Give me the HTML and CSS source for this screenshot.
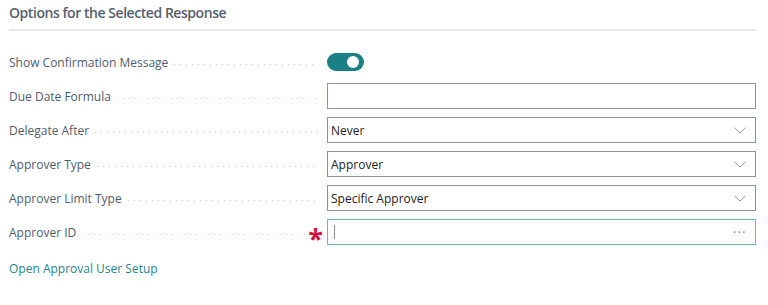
FILE: index.html
```html
<!DOCTYPE html>
<html>
<head>
<meta charset="utf-8">
<link rel="stylesheet" href="styles.css">
</head>
<body>
<div class="panel">
  <div class="title">Options for the Selected Response</div>
  <div class="rows">
    <div class="row">
      <div class="label"><span class="text">Show Confirmation Message</span><span class="dots"></span></div>
      <div class="control"><span class="toggle"><span class="knob"></span></span></div>
    </div>
    <div class="row">
      <div class="label"><span class="text">Due Date Formula</span><span class="dots"></span></div>
      <div class="control"><div class="input"></div></div>
    </div>
    <div class="row">
      <div class="label"><span class="text">Delegate After</span><span class="dots"></span></div>
      <div class="control"><div class="input select"><span class="val">Never</span><svg class="chev" width="12" height="7" viewBox="0 0 12 7"><path d="M0.5 0.8 L6 6 L11.5 0.8" fill="none" stroke="#8a939d" stroke-width="1"/></svg></div></div>
    </div>
    <div class="row">
      <div class="label"><span class="text">Approver Type</span><span class="dots"></span></div>
      <div class="control"><div class="input select"><span class="val">Approver</span><svg class="chev" width="12" height="7" viewBox="0 0 12 7"><path d="M0.5 0.8 L6 6 L11.5 0.8" fill="none" stroke="#8a939d" stroke-width="1"/></svg></div></div>
    </div>
    <div class="row">
      <div class="label"><span class="text">Approver Limit Type</span><span class="dots"></span></div>
      <div class="control"><div class="input select"><span class="val">Specific Approver</span><svg class="chev" width="12" height="7" viewBox="0 0 12 7"><path d="M0.5 0.8 L6 6 L11.5 0.8" fill="none" stroke="#8a939d" stroke-width="1"/></svg></div></div>
    </div>
    <div class="row">
      <div class="label"><span class="text">Approver ID</span><span class="dots"></span><span class="req">*</span></div>
      <div class="control"><div class="input focus"><span class="caret"></span><span class="more">···</span></div></div>
    </div>
  </div>
  <a class="link">Open Approval User Setup</a>
</div>
</body>
</html>
```

FILE: styles.css
```css
* { box-sizing: border-box; }
body {
  margin: 0;
  background: #ffffff;
  font-family: "Open Sans", "Noto Sans", sans-serif;
  color: #505c6d;
}
.panel {
  width: 756px;
  padding: 3px 0 0 9px;
}
.title {
  font-size: 14px;
  font-weight: 600;
  letter-spacing: -0.45px;
  color: #56606c;
  line-height: 20px;
  padding-bottom: 6px;
  border-bottom: 2px solid #e8e8e8;
}
.rows {
  display: flex;
  flex-direction: column;
  gap: 8px;
  margin-top: 18px;
}
.row {
  display: grid;
  grid-template-columns: 318px 1fr;
  height: 26px;
  align-items: center;
}
.label {
  display: flex;
  align-items: center;
  height: 26px;
  font-size: 12px;
  color: #505c6d;
  padding-right: 9px;
}
.label .text { white-space: nowrap; padding-right: 6px; }
.dots {
  flex: 1;
  height: 12px;
  align-self: center;
  margin-top: 4px;
  background-image: linear-gradient(to right, #c8cbcf 1px, transparent 1px);
  background-size: 6px 1px;
  background-repeat: repeat-x;
  background-position: 0 50%;
}
.req {
  color: #d4103e;
  font-size: 27px;
  font-weight: 700;
  line-height: 26px;
  height: 26px;
  margin-top: 11px;
  margin-left: 2px;
  margin-right: -5px;
}
.control { height: 26px; display: flex; align-items: center; }
.toggle {
  position: relative;
  display: inline-block;
  width: 37px;
  height: 18px;
  border-radius: 9px;
  background: #1b7f86;
}
.knob {
  position: absolute;
  right: 5px;
  top: 3px;
  width: 12px;
  height: 12px;
  border-radius: 50%;
  background: #ffffff;
}
.input {
  width: 100%;
  height: 26px;
  border: 1px solid #8b949e;
  display: flex;
  align-items: center;
  padding: 0 9px 0 3px;
  font-size: 12px;
  color: #212121;
}
.select .val { flex: 1; }
.chev { flex: none; margin-top: 1px; }
.focus { border: 1.5px solid #6cb8b6; }
.caret {
  width: 1px;
  height: 14px;
  background: #8a8a8a;
  margin-left: 3px;
}
.more {
  margin-left: auto;
  font-size: 12px;
  letter-spacing: 1.5px;
  margin-right: -1px;
  color: #6b7580;
}
.link {
  display: block;
  margin-top: 15px;
  font-size: 12px;
  color: #1f8590;
  cursor: pointer;
}
```
